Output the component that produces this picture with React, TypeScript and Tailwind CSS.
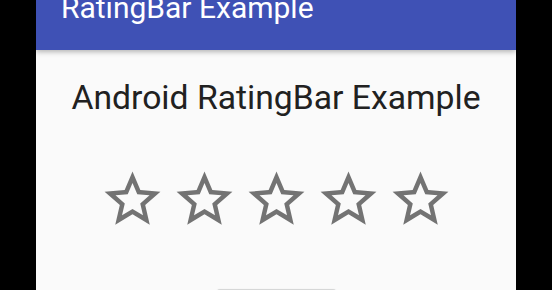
const STAR_BORDER =
  "M22 9.24l-7.19-.62L12 2 9.19 8.63 2 9.24l5.46 4.73L5.82 21 12 17.27 18.18 21l-1.63-7.03L22 9.24zM12 15.4l-3.76 2.27 1-4.28-3.32-2.88 4.38-.38L12 6.1l1.71 4.04 4.38.38-3.32 2.88 1 4.28L12 15.4z";

function Star() {
  return (
    <svg viewBox="0 0 24 24" className="size-[67px] shrink-0" aria-hidden>
      <path d={STAR_BORDER} fill="#737373" />
    </svg>
  );
}

export default function App() {
  return (
    <div className="flex h-[290px] w-[552px] justify-center overflow-hidden bg-black font-['Roboto',sans-serif]">
      <div className="flex w-[480px] flex-col bg-[#fafafa]">
        {/* toolbar, top cut off */}
        <div className="relative z-10 h-[50px] shrink-0 bg-[#3f51b5] shadow-[0_2px_5px_rgba(0,0,0,0.28)]">
          <p className="mt-[-7px] pl-[25px] text-[30px] leading-[30px] text-white">RatingBar Example</p>
        </div>

        <h1 className="mt-[28px] text-center text-[33.7px] leading-[40px] text-[#212121]">Android RatingBar Example</h1>

        <div className="mt-[48px] flex justify-center gap-[5px]">
          {[0, 1, 2, 3, 4].map((i) => (
            <Star key={i} />
          ))}
        </div>

        <div className="mx-auto mt-[56px] h-[40px] w-[119px] shrink-0 rounded-[3px] bg-[#d6d7d7] shadow-[0_1px_2px_rgba(0,0,0,0.25)]" />
      </div>
    </div>
  );
}
